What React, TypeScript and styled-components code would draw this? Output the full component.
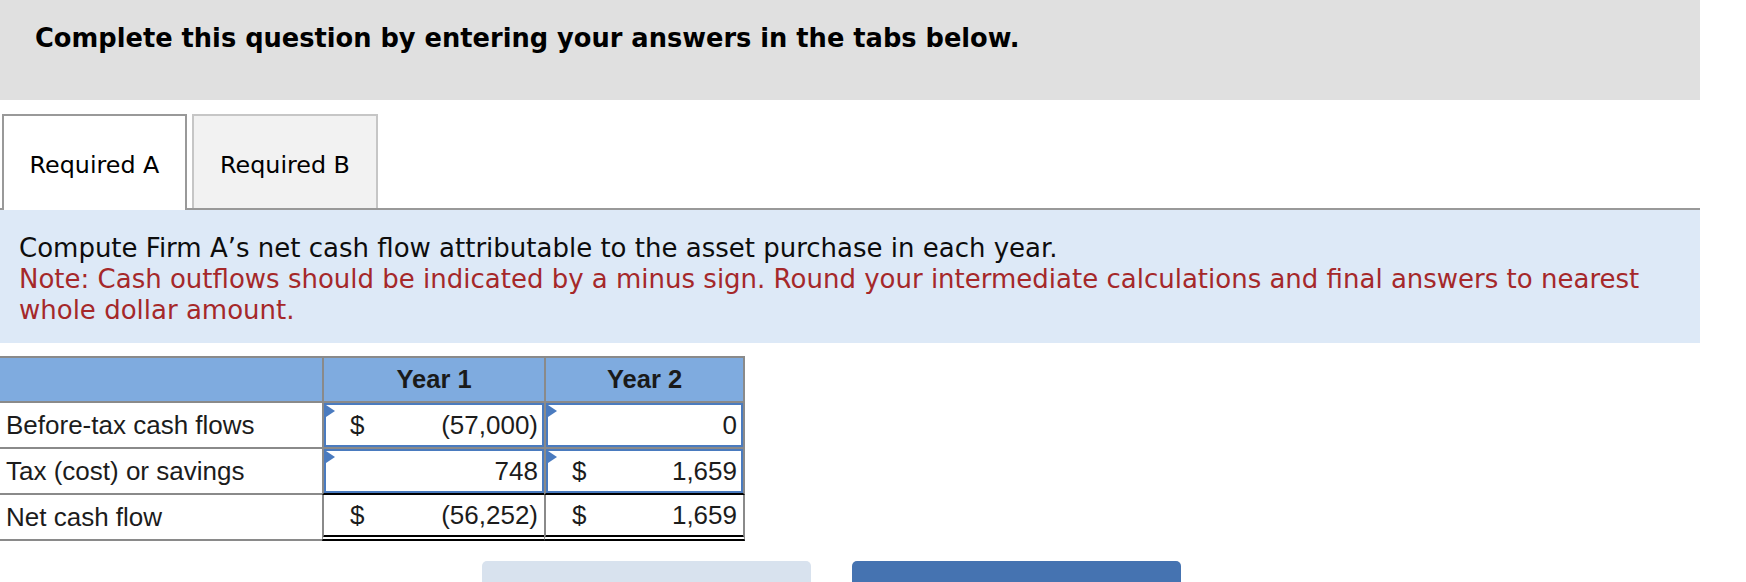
import React from "react";
import styled, { createGlobalStyle } from "styled-components";

const GlobalStyle = createGlobalStyle`
  html, body {
    margin: 0;
    padding: 0;
    background: #ffffff;
    overflow: hidden;
  }
  body {
    font-family: "DejaVu Sans", Verdana, sans-serif;
    color: #000000;
  }
`;

const Page = styled.div`
  width: 1746px;
  height: 582px;
  overflow: hidden;
`;

const Banner = styled.div`
  width: 1700px;
  height: 100px;
  box-sizing: border-box;
  background: #e0e0e0;
  padding: 22px 0 0 35px;
  font-weight: bold;
  font-size: 25.7px;
  line-height: 32px;
  color: #000;
  white-space: nowrap;
`;

const TabBar = styled.div`
  width: 1700px;
  height: 96px;
  margin-top: 14px;
  box-sizing: border-box;
  display: flex;
  align-items: flex-start;
  gap: 5px;
  padding-left: 2px;
  border-bottom: 2px solid #999999;
`;

const Tab = styled.div<{ $active?: boolean }>`
  box-sizing: border-box;
  flex-shrink: 0;
  width: ${(p) => (p.$active ? 185 : 186)}px;
  height: ${(p) => (p.$active ? 96 : 94)}px;
  border: 2px solid ${(p) => (p.$active ? "#999999" : "#c6c6c6")};
  border-bottom: none;
  background: ${(p) => (p.$active ? "#ffffff" : "#f2f2f2")};
  display: flex;
  align-items: center;
  justify-content: center;
  padding-top: ${(p) => (p.$active ? 4 : 6)}px;
  font-size: 23.8px;
  color: #000;
  white-space: nowrap;
`;

const Prompt = styled.div`
  width: 1700px;
  height: 133px;
  box-sizing: border-box;
  background: #dde9f7;
  padding: 23px 19px 0 19px;
  font-size: 26px;
  line-height: 31px;
  color: #0d0d0d;
  white-space: nowrap;
`;

const Note = styled.div`
  color: #a5282a;
`;

const Table = styled.div`
  margin-top: 13px;
  width: 745px;
  display: flex;
  flex-direction: column;
  font-family: "Liberation Sans", Arial, sans-serif;
  font-size: 26px;
  color: #1c1c1c;
`;

const Row = styled.div<{ $height: number }>`
  display: flex;
  flex-shrink: 0;
  height: ${(p) => p.$height}px;
`;

const LabelCell = styled.div<{ $head?: boolean }>`
  box-sizing: border-box;
  width: 322px;
  height: 100%;
  display: flex;
  align-items: center;
  padding-left: 6px;
  white-space: nowrap;
  background: ${(p) => (p.$head ? "#7fabdf" : "transparent")};
  border-top: ${(p) => (p.$head ? "2px solid #8a8a8a" : "none")};
  border-bottom: 2px solid #8a8a8a;
`;

type Bottom = "gray" | "black" | "double";

const ValueCell = styled.div<{
  $w: number;
  $last?: boolean;
  $head?: boolean;
  $bottom: Bottom;
}>`
  box-sizing: border-box;
  width: ${(p) => p.$w}px;
  height: 100%;
  display: flex;
  align-items: stretch;
  background: ${(p) => (p.$head ? "#7fabdf" : "transparent")};
  border-left: 2px solid #8a8a8a;
  border-right: ${(p) => (p.$last ? "2px solid #8a8a8a" : "none")};
  border-top: ${(p) => (p.$head ? "2px solid #8a8a8a" : "none")};
  border-bottom: ${(p) =>
    p.$bottom === "double"
      ? "6px double #000000"
      : p.$bottom === "black"
      ? "2px solid #000000"
      : "2px solid #8a8a8a"};
`;

const HeadText = styled.div`
  flex: 1;
  display: flex;
  align-items: center;
  justify-content: center;
  font-weight: bold;
  font-size: 25.5px;
  color: #1a1a1a;
`;

const InputBox = styled.div`
  position: relative;
  flex: 1;
  box-sizing: border-box;
  border: 2px solid #4a7bbf;
  background: #ffffff;
  display: flex;
  align-items: center;
  justify-content: space-between;
  padding: 0 4px 0 24px;
`;

const Marker = styled.span`
  position: absolute;
  top: 0;
  left: 0;
  width: 0;
  height: 0;
  border-left: 9px solid #4a7bbf;
  border-top: 6px solid transparent;
  border-bottom: 6px solid transparent;
`;

const Computed = styled.div`
  flex: 1;
  display: flex;
  align-items: center;
  justify-content: space-between;
  padding: 0 6px 0 26px;
`;

const Dollar = styled.span``;

const Amount = styled.span`
  margin-left: auto;
  text-align: right;
`;

const Buttons = styled.div`
  margin-top: 20px;
  padding-left: 482px;
  display: flex;
  gap: 41px;
`;

const NavButton = styled.div<{ $primary?: boolean }>`
  width: 329px;
  height: 40px;
  flex-shrink: 0;
  border-radius: 5px 5px 0 0;
  background: ${(p) => (p.$primary ? "#4573b1" : "#d8e2ee")};
`;

type Val = { dollar?: boolean; value: string };

const Entry: React.FC<Val> = ({ dollar, value }) => (
  <InputBox>
    <Marker />
    {dollar && <Dollar>$</Dollar>}
    <Amount>{value}</Amount>
  </InputBox>
);

const Total: React.FC<Val> = ({ dollar, value }) => (
  <Computed>
    {dollar && <Dollar>$</Dollar>}
    <Amount>{value}</Amount>
  </Computed>
);

export default function App() {
  return (
    <>
      <GlobalStyle />
      <Page>
        <Banner>Complete this question by entering your answers in the tabs below.</Banner>
        <TabBar>
          <Tab $active>Required A</Tab>
          <Tab>Required B</Tab>
        </TabBar>
        <Prompt>
          <div>Compute Firm A’s net cash flow attributable to the asset purchase in each year.</div>
          <Note>
            Note: Cash outflows should be indicated by a minus sign. Round your intermediate calculations and final answers to nearest
            <br />
            whole dollar amount.
          </Note>
        </Prompt>
        <Table>
          <Row $height={47}>
            <LabelCell $head />
            <ValueCell $w={222} $head $bottom="gray">
              <HeadText>Year 1</HeadText>
            </ValueCell>
            <ValueCell $w={201} $head $last $bottom="gray">
              <HeadText>Year 2</HeadText>
            </ValueCell>
          </Row>
          <Row $height={46}>
            <LabelCell>Before-tax cash flows</LabelCell>
            <ValueCell $w={222} $bottom="gray">
              <Entry dollar value="(57,000)" />
            </ValueCell>
            <ValueCell $w={201} $last $bottom="gray">
              <Entry value="0" />
            </ValueCell>
          </Row>
          <Row $height={46}>
            <LabelCell>Tax (cost) or savings</LabelCell>
            <ValueCell $w={222} $bottom="black">
              <Entry value="748" />
            </ValueCell>
            <ValueCell $w={201} $last $bottom="black">
              <Entry dollar value="1,659" />
            </ValueCell>
          </Row>
          <Row $height={46}>
            <LabelCell>Net cash flow</LabelCell>
            <ValueCell $w={222} $bottom="double">
              <Total dollar value="(56,252)" />
            </ValueCell>
            <ValueCell $w={201} $last $bottom="double">
              <Total dollar value="1,659" />
            </ValueCell>
          </Row>
        </Table>
        <Buttons>
          <NavButton />
          <NavButton $primary />
        </Buttons>
      </Page>
    </>
  );
}
